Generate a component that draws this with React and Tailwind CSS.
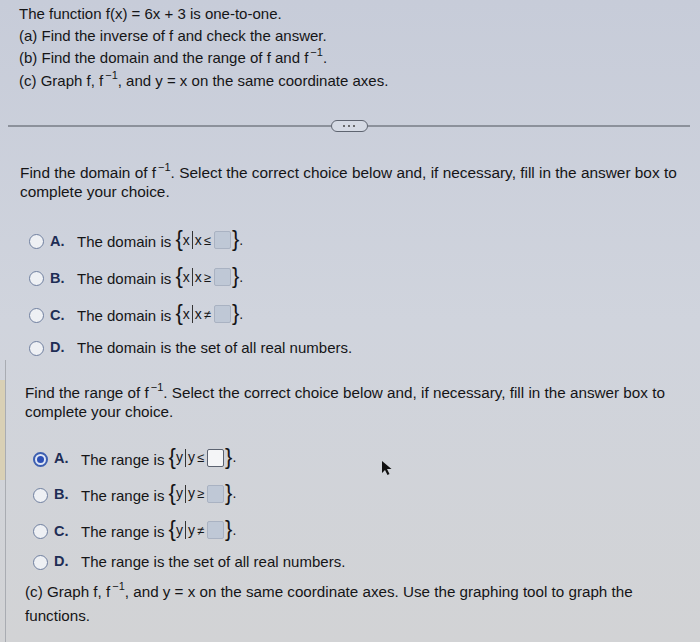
import React from "react";

const Sup = () => (
  <span>
    f<span className="relative top-[-7px] text-[11px] leading-none ml-[2px]">−1</span>
  </span>
);

function Box({ active }) {
  return (
    <span
      className={
        "inline-block w-[17px] h-[18px] align-[-3px] mx-[1px] " +
        (active
          ? "bg-[#f4f5f7] border border-[#5b6270] rounded-[2px]"
          : "bg-[#bfc8d6] border border-[#a9b2c2] rounded-[2px]")
      }
    ></span>
  );
}

function SetExpr({ v, op, active }) {
  return (
    <span className="inline-flex items-center">
      <span className="text-[22px] font-light leading-none relative top-[-1px]">{"{"}</span>
      <span className="text-[14px]">{v}</span>
      <span className="inline-block w-[1px] h-[18px] bg-[#333] mx-[2px]"></span>
      <span className="text-[14px]">{v}</span>
      <span className="text-[13px] mx-[2px]">{op}</span>
      <Box active={active} />
      <span className="text-[22px] font-light leading-none relative top-[-1px]">{"}"}</span>
      <span className="text-[14px]">.</span>
    </span>
  );
}

function Radio({ selected }) {
  return selected ? (
    <span className="inline-flex w-[15px] h-[15px] rounded-full border-[2px] border-[#3d5fb0] bg-[#dfe6f5] items-center justify-center">
      <span className="w-[7px] h-[7px] rounded-full bg-[#2c4fb5]"></span>
    </span>
  ) : (
    <span className="inline-block w-[15px] h-[15px] rounded-full border-[1.5px] border-[#6f7f9f] bg-[#eef0f4]"></span>
  );
}

function Option({ letter, selected, children, h }) {
  return (
    <div className={"flex items-center " + h}>
      <Radio selected={selected} />
      <span className="ml-[6px] w-[27px] font-bold text-[14.5px] text-[#1e2d55]">{letter}</span>
      <span className="text-[15px]">{children}</span>
    </div>
  );
}

export default function App() {
  return (
    <div
      className="w-[700px] h-[642px] overflow-hidden relative bg-gradient-to-b from-[#c7ccd9] via-[#d0d4dd] to-[#d2d3d5] text-[#151517]"
      style={{ fontFamily: '"Liberation Sans", Arial, sans-serif' }}
    >
      <div className="absolute left-[5px] top-[360px] bottom-0 w-[1px] bg-[#a9acb2]"></div>
      <div className="absolute left-0 top-[380px] w-[5px] h-[100px] bg-[#d9d0b5]"></div>

      <div className="pl-[19px] pt-[3px] text-[15px] leading-[22px]">
        <div>The function f(x) = 6x + 3 is one-to-one.</div>
        <div>(a) Find the inverse of f and check the answer.</div>
        <div>(b) Find the domain and the range of f and <Sup />.</div>
        <div className="mt-[1px]">(c) Graph f, <Sup />, and y = x on the same coordinate axes.</div>
      </div>

      <div className="mt-[28px] ml-[8px] mr-[10px] flex items-center">
        <div className="flex-1 h-[1.5px] bg-[#8c919b]"></div>
        <div className="w-[37px] h-[12px] rounded-[6px] border-[1.5px] border-[#5e6470] bg-[#d5dae4] flex items-center justify-center gap-[3px]">
          <span className="w-[2px] h-[2px] rounded-full bg-[#444]"></span>
          <span className="w-[2px] h-[2px] rounded-full bg-[#444]"></span>
          <span className="w-[2px] h-[2px] rounded-full bg-[#444]"></span>
        </div>
        <div className="flex-1 h-[1.5px] bg-[#8c919b]"></div>
      </div>

      <div className="pl-[20px] pt-[31px] text-[15.4px] leading-[19px]">
        <div>Find the domain of <Sup />. Select the correct choice below and, if necessary, fill in the answer box to</div>
        <div>complete your choice.</div>
      </div>

      <div className="pl-[29px] pt-[22px]">
        <Option letter="A." h="h-[37px]">The domain is <SetExpr v="x" op="≤" /></Option>
        <Option letter="B." h="h-[37px]">The domain is <SetExpr v="x" op="≥" /></Option>
        <Option letter="C." h="h-[37px]">The domain is <SetExpr v="x" op="≠" /></Option>
        <Option letter="D." h="h-[28px]">The domain is the set of all real numbers.</Option>
      </div>

      <div className="pl-[25px] pt-[21px] text-[15.25px] leading-[19px]">
        <div>Find the range of <Sup />. Select the correct choice below and, if necessary, fill in the answer box to</div>
        <div>complete your choice.</div>
      </div>

      <div className="pl-[33px] pt-[20px]">
        <Option letter="A." selected h="h-[36px]">The range is <SetExpr v="y" op="≤" active /></Option>
        <Option letter="B." h="h-[36px]">The range is <SetExpr v="y" op="≥" /></Option>
        <Option letter="C." h="h-[37px]">The range is <SetExpr v="y" op="≠" /></Option>
        <Option letter="D." h="h-[24px]">The range is the set of all real numbers.</Option>
      </div>

      <div className="pl-[25px] pt-[6px] text-[15.2px] leading-[24px]">
        <div>(c) Graph f, <Sup />, and y = x on the same coordinate axes. Use the graphing tool to graph the</div>
        <div>functions.</div>
      </div>

      <svg className="absolute left-[381px] top-[460px]" width="12" height="16" viewBox="0 0 12 16">
        <path d="M1 1 L1 13 L4 10 L6.5 15 L8.5 14 L6 9 L10.5 9 Z" fill="#111" />
      </svg>
    </div>
  );
}
